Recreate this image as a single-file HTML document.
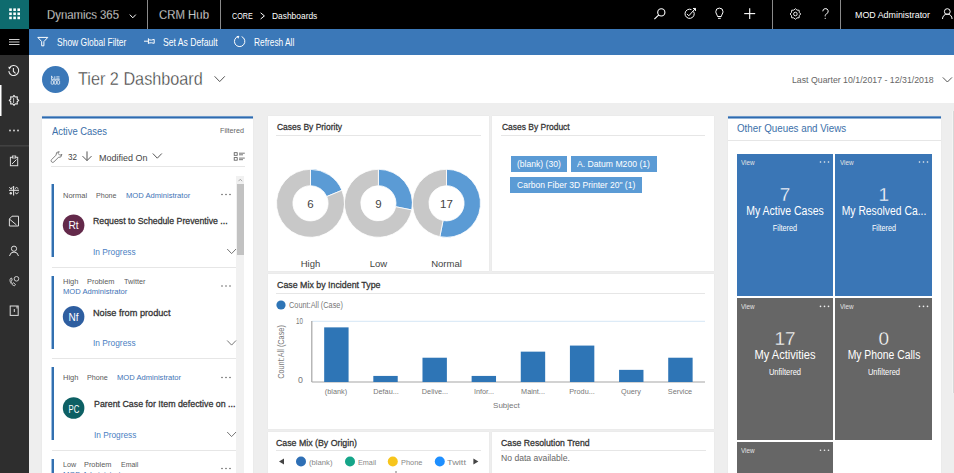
<!DOCTYPE html>
<html><head><meta charset="utf-8"><style>
html,body{margin:0;padding:0;}
body{width:954px;height:473px;overflow:hidden;position:relative;background:#eeeeee;font-family:"Liberation Sans",sans-serif;}
.t{position:absolute;white-space:nowrap;line-height:1;font-family:"Liberation Sans",sans-serif;}
.b{position:absolute;}
svg{position:absolute;overflow:visible;}

</style></head><body>
<div class="b" style="left:0px;top:0px;width:954px;height:29px;background:#000;"></div>
<div class="b" style="left:0px;top:0px;width:29px;height:29px;background:#0e6b6e;"></div>
<div class="b" style="left:147px;top:0px;width:1px;height:29px;background:#8a8a8a;"></div>
<div class="b" style="left:220px;top:0px;width:1px;height:29px;background:#8a8a8a;"></div>
<div class="b" style="left:772px;top:0px;width:1px;height:29px;background:#8a8a8a;"></div>
<div class="b" style="left:840px;top:0px;width:1px;height:29px;background:#8a8a8a;"></div>
<div class="b" style="left:0px;top:29px;width:29px;height:26px;background:#000;"></div>
<div class="b" style="left:0px;top:55px;width:29px;height:418px;background:#2e2e2e;"></div>
<div class="b" style="left:29px;top:29px;width:925px;height:26px;background:#3b78b8;"></div>
<div class="b" style="left:29px;top:55px;width:925px;height:48px;background:#ffffff;"></div>
<div class="b" style="left:42px;top:66px;width:27px;height:27px;background:#3b78b8;border-radius:50%"></div>
<div class="b" style="left:42px;top:116px;width:211px;height:357px;background:#fff;box-shadow:0 0 1px rgba(0,0,0,0.09);"></div>
<div class="b" style="left:42px;top:116px;width:211px;height:1px;background:#6d9acb;"></div>
<div class="b" style="left:42px;top:117px;width:211px;height:1px;background:#2f6aae;"></div>
<div class="b" style="left:42px;top:118px;width:211px;height:1px;background:#8fb2d8;"></div>
<div class="b" style="left:268px;top:116px;width:221px;height:155px;background:#fff;box-shadow:0 0 1px rgba(0,0,0,0.09);"></div>
<div class="b" style="left:492px;top:116px;width:222px;height:155px;background:#fff;box-shadow:0 0 1px rgba(0,0,0,0.09);"></div>
<div class="b" style="left:268px;top:274px;width:446px;height:154.5px;background:#fff;box-shadow:0 0 1px rgba(0,0,0,0.09);"></div>
<div class="b" style="left:268px;top:431.6px;width:221px;height:42px;background:#fff;box-shadow:0 0 1px rgba(0,0,0,0.09);"></div>
<div class="b" style="left:492px;top:431.6px;width:222px;height:42px;background:#fff;box-shadow:0 0 1px rgba(0,0,0,0.09);"></div>
<div class="b" style="left:728px;top:116px;width:213px;height:357px;background:#fff;box-shadow:0 0 1px rgba(0,0,0,0.09);"></div>
<div class="b" style="left:728px;top:116px;width:213px;height:1px;background:#6d9acb;"></div>
<div class="b" style="left:728px;top:117px;width:213px;height:1px;background:#2f6aae;"></div>
<div class="b" style="left:728px;top:118px;width:213px;height:1px;background:#8fb2d8;"></div>
<div class="b" style="left:953px;top:111px;width:1px;height:282px;background:#d8d8d8;"></div>
<div class="b" style="left:952px;top:111px;width:1px;height:282px;background:#f4f4f4;"></div>
<div class="b" style="left:276px;top:135px;width:205px;height:1px;background:#e6e6e6;"></div>
<div class="b" style="left:501px;top:135px;width:204px;height:1px;background:#e6e6e6;"></div>
<div class="b" style="left:276px;top:293px;width:429px;height:1px;background:#e6e6e6;"></div>
<div class="b" style="left:276px;top:450px;width:205px;height:1px;background:#e6e6e6;"></div>
<div class="b" style="left:501px;top:450px;width:205px;height:1px;background:#e6e6e6;"></div>
<div class="b" style="left:728px;top:140px;width:213px;height:1px;background:#e6e6e6;"></div>
<div class="b" style="left:51px;top:166px;width:194px;height:1px;background:#e6e6e6;"></div>
<div class="b" style="left:51px;top:184px;width:1px;height:73px;background:#9dbde0;"></div>
<div class="b" style="left:52px;top:184px;width:2px;height:73px;background:#3270b0;"></div>
<svg style="left:0;top:0" width="954" height="473"><circle cx="73.6" cy="225.2" r="10.8" fill="#63294a"/></svg>
<div class="b" style="left:52px;top:267px;width:184px;height:1px;background:#e6e6e6;"></div>
<div class="b" style="left:51px;top:276px;width:1px;height:73px;background:#9dbde0;"></div>
<div class="b" style="left:52px;top:276px;width:2px;height:73px;background:#3270b0;"></div>
<svg style="left:0;top:0" width="954" height="473"><circle cx="73.6" cy="316.7" r="10.8" fill="#2e5ea0"/></svg>
<div class="b" style="left:52px;top:358px;width:184px;height:1px;background:#e6e6e6;"></div>
<div class="b" style="left:51px;top:367px;width:1px;height:73px;background:#9dbde0;"></div>
<div class="b" style="left:52px;top:367px;width:2px;height:73px;background:#3270b0;"></div>
<svg style="left:0;top:0" width="954" height="473"><circle cx="73.6" cy="408" r="10.8" fill="#0d6064"/></svg>
<div class="b" style="left:52px;top:450px;width:184px;height:1px;background:#e6e6e6;"></div>
<div class="b" style="left:51px;top:459px;width:1px;height:14px;background:#9dbde0;"></div>
<div class="b" style="left:52px;top:459px;width:2px;height:14px;background:#3270b0;"></div>
<svg style="left:0;top:0" width="954" height="473"><circle cx="73.6" cy="0" r="10.8" fill="#000"/></svg>
<div class="b" style="left:236px;top:176px;width:8px;height:297px;background:#f1f1f1;"></div>
<div class="b" style="left:237px;top:184px;width:7px;height:71px;background:#c2c2c2;"></div>
<svg style="left:0;top:0" width="954" height="473" viewBox="0 0 954 473">
<path d="M310.50,169.30 A34,34 0 0 1 341.91,190.29 L326.76,196.56 A17.6,17.6 0 0 0 310.50,185.70 Z" fill="#5b9bd5" stroke="#fff" stroke-width="0.8"/>
<path d="M341.91,190.29 A34,34 0 1 1 310.50,169.30 L310.50,185.70 A17.6,17.6 0 1 0 326.76,196.56 Z" fill="#c8c8c8" stroke="#fff" stroke-width="0.8"/>
<path d="M378.40,169.30 A34,34 0 0 1 411.75,209.93 L395.66,206.73 A17.6,17.6 0 0 0 378.40,185.70 Z" fill="#5b9bd5" stroke="#fff" stroke-width="0.8"/>
<path d="M411.75,209.93 A34,34 0 1 1 378.40,169.30 L378.40,185.70 A17.6,17.6 0 1 0 395.66,206.73 Z" fill="#c8c8c8" stroke="#fff" stroke-width="0.8"/>
<path d="M446.50,169.30 A34,34 0 1 1 439.87,236.65 L443.07,220.56 A17.6,17.6 0 1 0 446.50,185.70 Z" fill="#5b9bd5" stroke="#fff" stroke-width="0.8"/>
<path d="M439.87,236.65 A34,34 0 0 1 446.50,169.30 L446.50,185.70 A17.6,17.6 0 0 0 443.07,220.56 Z" fill="#c8c8c8" stroke="#fff" stroke-width="0.8"/>
<line x1="311.8" y1="321.3" x2="705" y2="321.3" stroke="#d5e6f5" stroke-width="1"/>
<line x1="311.8" y1="321" x2="311.8" y2="382" stroke="#a6a6a6" stroke-width="1.2"/>
<line x1="311.8" y1="382" x2="705" y2="382" stroke="#a6a6a6" stroke-width="1.2"/>
<rect x="324.18" y="327.37" width="24.4" height="54.63" fill="#2e75b6"/>
<rect x="373.32" y="375.93" width="24.4" height="6.07" fill="#2e75b6"/>
<rect x="422.48" y="357.72" width="24.4" height="24.28" fill="#2e75b6"/>
<rect x="471.63" y="375.93" width="24.4" height="6.07" fill="#2e75b6"/>
<rect x="520.77" y="351.65" width="24.4" height="30.35" fill="#2e75b6"/>
<rect x="569.92" y="345.58" width="24.4" height="36.42" fill="#2e75b6"/>
<rect x="619.07" y="369.86" width="24.4" height="12.14" fill="#2e75b6"/>
<rect x="668.22" y="357.72" width="24.4" height="24.28" fill="#2e75b6"/>
<circle cx="281" cy="305" r="4.6" fill="#2e75b6"/>
<circle cx="301" cy="461.5" r="5" fill="#2e6fb5"/>
<circle cx="350" cy="461.5" r="5" fill="#15a589"/>
<circle cx="392.8" cy="461.5" r="5" fill="#f7c51c"/>
<circle cx="439.8" cy="461.5" r="5" fill="#1e8fff"/>
<path d="M279,461.5 L284,458.5 L284,464.5 Z" fill="#444"/>
<path d="M478.4,461.5 L473.4,458.5 L473.4,464.5 Z" fill="#444"/>
</svg>
<div class="b" style="left:511px;top:156px;width:56px;height:16.4px;background:#5b9bd5;"></div>
<div class="b" style="left:570.5px;top:156px;width:86px;height:16px;background:#5b9bd5;"></div>
<div class="b" style="left:510px;top:177px;width:132px;height:15.5px;background:#5b9bd5;"></div>
<div class="b" style="left:737px;top:154px;width:96px;height:142px;background:#3a76b6;"></div>
<div class="b" style="left:835px;top:154px;width:97px;height:142px;background:#3a76b6;"></div>
<div class="b" style="left:737px;top:298px;width:96px;height:142px;background:#666666;"></div>
<div class="b" style="left:835px;top:298px;width:97px;height:142px;background:#666666;"></div>
<div class="b" style="left:737px;top:442px;width:96px;height:31px;background:#666666;"></div>
<svg style="left:0;top:0" width="954" height="473" viewBox="0 0 954 473">
<rect x="9.2" y="8.4" width="2.6" height="2.6" fill="#fff"/>
<rect x="9.2" y="12.5" width="2.6" height="2.6" fill="#fff"/>
<rect x="9.2" y="16.6" width="2.6" height="2.6" fill="#fff"/>
<rect x="13.3" y="8.4" width="2.6" height="2.6" fill="#fff"/>
<rect x="13.3" y="12.5" width="2.6" height="2.6" fill="#fff"/>
<rect x="13.3" y="16.6" width="2.6" height="2.6" fill="#fff"/>
<rect x="17.4" y="8.4" width="2.6" height="2.6" fill="#fff"/>
<rect x="17.4" y="12.5" width="2.6" height="2.6" fill="#fff"/>
<rect x="17.4" y="16.6" width="2.6" height="2.6" fill="#fff"/>
<rect x="9" y="39.0" width="10.5" height="1" fill="#d0d0d0"/>
<rect x="9" y="41.5" width="10.5" height="1" fill="#d0d0d0"/>
<rect x="9" y="44.0" width="10.5" height="1" fill="#d0d0d0"/>
<polyline points="129.8,14.6 132.8,17.8 135.8,14.6" fill="none" stroke="#ffffff" stroke-width="1" />
<polyline points="260.6,12.8 264.4,15.9 260.6,19" fill="none" stroke="#ffffff" stroke-width="1" />
<circle cx="661.3" cy="12.4" r="3.6" fill="none" stroke="#fff" stroke-width="1.1"/>
<polyline points="658.8,14.9 654.4,19.1" fill="none" stroke="#ffffff" stroke-width="1.2" />
<path d="M693.6,11.5 A4.6,4.6 0 1 1 691.5,9.6" fill="none" stroke="#fff" stroke-width="1"/>
<polyline points="687,13.9 688.8,15.8 695.3,8.6" fill="none" stroke="#ffffff" stroke-width="1" />
<polyline points="693,8.5 695.5,8.4 695.4,11" fill="none" stroke="#ffffff" stroke-width="1" />
<path d="M717.5,16.5 C717.2,14.5 715.8,13.5 715.8,11.7 A3.6,3.6 0 0 1 723,11.7 C723,13.5 721.6,14.5 721.3,16.5 Z" fill="none" stroke="#fff" stroke-width="1"/>
<polyline points="718,18.3 720.8,18.3" fill="none" stroke="#ffffff" stroke-width="1" />
<polyline points="744.2,13.6 755.2,13.6" fill="none" stroke="#ffffff" stroke-width="1.1" />
<polyline points="749.7,8.2 749.7,19" fill="none" stroke="#ffffff" stroke-width="1.1" />
<polygon points="795.40,8.70 797.01,10.12 799.15,10.25 799.28,12.39 800.70,14.00 799.28,15.61 799.15,17.75 797.01,17.88 795.40,19.30 793.79,17.88 791.65,17.75 791.52,15.61 790.10,14.00 791.52,12.39 791.65,10.25 793.79,10.12" fill="none" stroke="#fff" stroke-width="0.9" stroke-linejoin="round"/>
<circle cx="795.4" cy="14" r="1.8" fill="none" stroke="#fff" stroke-width="0.9"/>
<path d="M822.8,11.3 A2.7,2.7 0 1 1 826.5,13.8 C825.4,14.5 825.2,15 825.2,16.4" fill="none" stroke="#fff" stroke-width="1"/>
<circle cx="825.2" cy="18.3" r="0.6" fill="#fff"/>
<circle cx="947.3" cy="11.6" r="2.9" fill="none" stroke="#fff" stroke-width="1"/>
<path d="M942.5,19 A4.8,5 0 0 1 952.1,19" fill="none" stroke="#fff" stroke-width="1"/>
<path d="M37.8,37.4 L47.8,37.4 L43.9,41.6 L43.9,45.8 L41.7,45.8 L41.7,41.6 Z" fill="none" stroke="#fff" stroke-width="1" stroke-linejoin="round"/>
<polyline points="144,41.2 148.3,41.2" fill="none" stroke="#ffffff" stroke-width="1" />
<path d="M148.4,38.3 L148.4,43.8 M148.4,39.8 Q151.4,40.6 154.2,39.4 L154.2,43.3 Q151.4,42.4 148.4,43" fill="none" stroke="#fff" stroke-width="1"/>
<path d="M238.6,36.3 A5.2,5.2 0 1 0 241.65,36.6" fill="none" stroke="#fff" stroke-width="1"/>
<path d="M236.6,36 L239.4,36.2 L238.2,38.8 Z" fill="#fff"/>
<rect x="51.2" y="80.6" width="2.4" height="3.6" rx="0.6" fill="none" stroke="#fff" stroke-width="0.7"/>
<rect x="54.2" y="80.6" width="2.4" height="3.6" rx="0.6" fill="none" stroke="#fff" stroke-width="0.7"/>
<rect x="57.2" y="80.6" width="2.4" height="3.6" rx="0.6" fill="none" stroke="#fff" stroke-width="0.7"/>
<polyline points="51,79.4 59.8,79.4" fill="none" stroke="#ffffff" stroke-width="0.7" />
<polyline points="51.5,75.8 51.5,79 M52.8,76.3 L52.8,79" fill="none" stroke="#ffffff" stroke-width="0.7" />
<path d="M51.5,76 L53.5,78.5 M54.8,76.2 L54.8,79 M56.3,76.8 L59.5,76.8 M56.3,78.2 L59.5,78.2" stroke="#fff" stroke-width="0.7" fill="none"/>
<polyline points="214.6,76.3 219.7,81.6 224.8,76.3" fill="none" stroke="#555" stroke-width="1" />
<polyline points="942.8,77.4 947.4,82 952,77.4" fill="none" stroke="#555" stroke-width="1" />
<path d="M9.37,68.00 A5,5 0 1 1 8.75,71.20" fill="none" stroke="#e8e8e8" stroke-width="1.1"/>
<path d="M8.3,66.8 L11.2,67.2 L9.2,69.6 Z" fill="#f0f0f0"/>
<polyline points="13.4,68 13.4,71.4 15.6,73.4" fill="none" stroke="#e8e8e8" stroke-width="1.1" />
<rect x="0" y="85" width="1.5" height="31" fill="#fff"/>
<polygon points="18.75,100.40 17.16,101.78 17.36,103.94 15.31,103.73 14.00,105.40 12.69,103.73 10.64,103.94 10.84,101.78 9.25,100.40 10.84,99.02 10.64,96.86 12.69,97.07 14.00,95.40 15.31,97.07 17.36,96.86 17.16,99.02" fill="none" stroke="#e8e8e8" stroke-width="1.1" stroke-linejoin="round"/>
<polyline points="13.6,97.8 13.6,103" fill="none" stroke="#e8e8e8" stroke-width="0.8" />
<circle cx="10" cy="130.5" r="0.9" fill="#ddd"/>
<circle cx="14" cy="130.5" r="0.9" fill="#ddd"/>
<circle cx="18" cy="130.5" r="0.9" fill="#ddd"/>
<rect x="0" y="145.5" width="29" height="0.8" fill="#555"/>
<rect x="10.4" y="157.3" width="7.3" height="8.4" fill="none" stroke="#ddd" stroke-width="1"/>
<rect x="12.4" y="156" width="3.3" height="2" fill="#2e2e2e" stroke="#ddd" stroke-width="0.9"/>
<polyline points="12,164 16.5,159.5" fill="none" stroke="#ddd" stroke-width="1" />
<polyline points="13.6,185.9 13.6,195.4" fill="none" stroke="#e0e0e0" stroke-width="1.1" />
<polyline points="9,190.3 19,190.3" fill="none" stroke="#e0e0e0" stroke-width="1.1" />
<polyline points="9.3,187.2 11.3,189.2 12.3,186.8" fill="none" stroke="#e0e0e0" stroke-width="1" />
<path d="M15,188.6 Q16.5,186.3 18.3,188.6" fill="none" stroke="#e0e0e0" stroke-width="1"/>
<circle cx="10.8" cy="193.3" r="1.2" fill="#e0e0e0"/>
<polyline points="15,192.6 16.8,193.8 18.6,192.2" fill="none" stroke="#e0e0e0" stroke-width="1" />
<path d="M9.4,219 L12,216.2 L18.5,216.2 L18.5,226 L9.4,226 Z M9.4,219 L16.5,225" fill="none" stroke="#ddd" stroke-width="1"/>
<circle cx="14" cy="248.7" r="2.6" fill="none" stroke="#ddd" stroke-width="1"/>
<path d="M9.5,256 A4.6,5 0 0 1 18.5,256" fill="none" stroke="#ddd" stroke-width="1"/>
<path d="M10.5,278.5 C9,280.5 11,285 14.5,285.8 L15.5,284.5 L13.5,282.8 L12.5,283.5 C11.5,282.8 11,281.8 11.2,280.8 L12.2,280.2 L11.6,278 Z" fill="none" stroke="#ddd" stroke-width="0.9"/>
<circle cx="16.5" cy="278.8" r="2.3" fill="none" stroke="#ddd" stroke-width="0.9"/>
<rect x="10.2" y="306" width="8" height="9.4" fill="none" stroke="#ddd" stroke-width="1"/>
<polyline points="14.3,309 14.3,312" fill="none" stroke="#ddd" stroke-width="1" />
<polyline points="17,306 17,308.5" fill="none" stroke="#ddd" stroke-width="1" />
<path d="M51.6,159.6 L56,155.2 A3.3,3.3 0 0 1 59.2,151.6 L58.2,153.6 L59.9,155.3 L61.9,154.3 A3.3,3.3 0 0 1 58.3,157.5 L53.9,161.9 A1.1,1.1 0 0 1 51.6,159.6 Z" fill="none" stroke="#6a6a6a" stroke-width="0.85" stroke-linejoin="round"/>
<polyline points="87,151.4 87,160.6" fill="none" stroke="#555" stroke-width="1" />
<polyline points="82.5,156.1 87,160.6 91.5,156.1" fill="none" stroke="#555" stroke-width="1" />
<polyline points="152.8,153.5 157.3,158.2 161.8,153.5" fill="none" stroke="#555" stroke-width="1" />
<rect x="234.2" y="152.7" width="3" height="2.6" fill="none" stroke="#555" stroke-width="0.8"/>
<polyline points="239,153.2 244.8,153.2" fill="none" stroke="#555" stroke-width="0.8" />
<polyline points="239,154.79999999999998 243,154.79999999999998" fill="none" stroke="#555" stroke-width="0.8" />
<rect x="234.2" y="157.6" width="3" height="2.6" fill="none" stroke="#555" stroke-width="0.8"/>
<polyline points="239,158.1 244.8,158.1" fill="none" stroke="#555" stroke-width="0.8" />
<polyline points="239,159.7 243,159.7" fill="none" stroke="#555" stroke-width="0.8" />
<circle cx="222" cy="194.4" r="0.75" fill="#555"/>
<circle cx="226" cy="194.4" r="0.75" fill="#555"/>
<circle cx="230" cy="194.4" r="0.75" fill="#555"/>
<polyline points="227.2,249 231.6,253.6 236,249" fill="none" stroke="#666" stroke-width="0.9" />
<circle cx="222" cy="285.9" r="0.75" fill="#555"/>
<circle cx="226" cy="285.9" r="0.75" fill="#555"/>
<circle cx="230" cy="285.9" r="0.75" fill="#555"/>
<polyline points="227.2,340.5 231.6,345.1 236,340.5" fill="none" stroke="#666" stroke-width="0.9" />
<circle cx="222" cy="377.6" r="0.75" fill="#555"/>
<circle cx="226" cy="377.6" r="0.75" fill="#555"/>
<circle cx="230" cy="377.6" r="0.75" fill="#555"/>
<polyline points="227.2,432 231.6,436.6 236,432" fill="none" stroke="#666" stroke-width="0.9" />
<circle cx="222" cy="468.5" r="0.75" fill="#555"/>
<circle cx="226" cy="468.5" r="0.75" fill="#555"/>
<circle cx="230" cy="468.5" r="0.75" fill="#555"/>
<path d="M238.5,181.2 L240.3,179.2 L242.1,181.2" fill="none" stroke="#999" stroke-width="0.8"/>
<circle cx="820.5" cy="162" r="0.8" fill="#f0f0f0"/>
<circle cx="824.5" cy="162" r="0.8" fill="#f0f0f0"/>
<circle cx="828.5" cy="162" r="0.8" fill="#f0f0f0"/>
<circle cx="919.5" cy="162" r="0.8" fill="#f0f0f0"/>
<circle cx="923.5" cy="162" r="0.8" fill="#f0f0f0"/>
<circle cx="927.5" cy="162" r="0.8" fill="#f0f0f0"/>
<circle cx="820.5" cy="306.4" r="0.8" fill="#f0f0f0"/>
<circle cx="824.5" cy="306.4" r="0.8" fill="#f0f0f0"/>
<circle cx="828.5" cy="306.4" r="0.8" fill="#f0f0f0"/>
<circle cx="919.5" cy="306.4" r="0.8" fill="#f0f0f0"/>
<circle cx="923.5" cy="306.4" r="0.8" fill="#f0f0f0"/>
<circle cx="927.5" cy="306.4" r="0.8" fill="#f0f0f0"/>
<circle cx="820.5" cy="450.3" r="0.8" fill="#f0f0f0"/>
<circle cx="824.5" cy="450.3" r="0.8" fill="#f0f0f0"/>
<circle cx="828.5" cy="450.3" r="0.8" fill="#f0f0f0"/>
<rect x="395.5" y="471" width="1" height="2" fill="#777"/>
</svg>
<div class="t" id="t0" style="top:7.90px;font-size:13px;color:#ffffff;font-weight:400;left:47.20px;transform-origin:0 0;transform:scaleX(0.8741);-webkit-text-stroke:0.3px #000;">Dynamics 365</div>
<div class="t" id="t1" style="top:7.90px;font-size:13px;color:#ffffff;font-weight:400;left:158.50px;transform-origin:0 0;transform:scaleX(0.8760);-webkit-text-stroke:0.3px #000;">CRM Hub</div>
<div class="t" id="t2" style="top:12.18px;font-size:9px;color:#ffffff;font-weight:400;left:232.00px;transform-origin:0 0;transform:scaleX(0.7995);">CORE</div>
<div class="t" id="t3" style="top:12.18px;font-size:9px;color:#ffffff;font-weight:400;left:271.60px;transform-origin:0 0;transform:scaleX(0.9334);">Dashboards</div>
<div class="t" id="t4" style="top:11.23px;font-size:9.3px;color:#ffffff;font-weight:400;left:855.40px;transform-origin:0 0;transform:scaleX(0.9550);">MOD Administrator</div>
<div class="t" id="t5" style="top:37.97px;font-size:10.2px;color:#ffffff;font-weight:400;left:56.70px;transform-origin:0 0;transform:scaleX(0.8338);">Show Global Filter</div>
<div class="t" id="t6" style="top:37.97px;font-size:10.2px;color:#ffffff;font-weight:400;left:162.60px;transform-origin:0 0;transform:scaleX(0.8457);">Set As Default</div>
<div class="t" id="t7" style="top:37.97px;font-size:10.2px;color:#ffffff;font-weight:400;left:253.70px;transform-origin:0 0;transform:scaleX(0.8180);">Refresh All</div>
<div class="t" id="t8" style="top:69.12px;font-size:19px;color:#3c3c3c;font-weight:400;left:78.00px;transform-origin:0 0;transform:scaleX(0.8542);-webkit-text-stroke:0.35px #fff;">Tier 2 Dashboard</div>
<div class="t" id="t9" style="top:76.01px;font-size:9.2px;color:#666666;font-weight:400;left:791.50px;transform-origin:0 0;transform:scaleX(0.9533);">Last Quarter 10/1/2017 - 12/31/2018</div>
<div class="t" id="t10" style="top:125.81px;font-size:10.5px;color:#3b6fa9;font-weight:400;left:51.50px;transform-origin:0 0;transform:scaleX(0.8975);">Active Cases</div>
<div class="t" id="t11" style="top:127.43px;font-size:8px;color:#666666;font-weight:400;left:220.00px;transform-origin:0 0;transform:scaleX(0.8993);">Filtered</div>
<div class="t" id="t12" style="top:152.39px;font-size:9.7px;color:#444444;font-weight:400;left:68.40px;transform-origin:0 0;transform:scaleX(0.8348);">32</div>
<div class="t" id="t13" style="top:152.74px;font-size:9.4px;color:#444444;font-weight:400;left:98.80px;transform-origin:0 0;transform:scaleX(0.9575);">Modified On</div>
<div class="t" id="t14" style="top:191.53px;font-size:8px;color:#5a5a5a;font-weight:400;left:62.60px;transform-origin:0 0;transform:scaleX(0.9387);">Normal</div>
<div class="t" id="t15" style="top:191.53px;font-size:8px;color:#5a5a5a;font-weight:400;left:96.00px;transform-origin:0 0;transform:scaleX(0.8859);">Phone</div>
<div class="t" id="t16" style="top:191.53px;font-size:8px;color:#3f74b6;font-weight:400;left:125.60px;transform-origin:0 0;transform:scaleX(0.9500);">MOD Administrator</div>
<div class="t" id="t17" style="top:217.03px;font-size:9.3px;color:#333333;font-weight:400;-webkit-text-stroke:0.28px #333333;left:93.40px;transform-origin:0 0;transform:scaleX(0.9402);">Request to Schedule Preventive ...</div>
<div class="t" id="t18" style="top:246.96px;font-size:9.5px;color:#4a80c2;font-weight:400;left:93.40px;transform-origin:0 0;transform:scaleX(0.8769);">In Progress</div>
<div class="t" id="t19" style="top:278.23px;font-size:8px;color:#5a5a5a;font-weight:400;left:62.60px;transform-origin:0 0;transform:scaleX(0.9360);">High</div>
<div class="t" id="t20" style="top:278.23px;font-size:8px;color:#5a5a5a;font-weight:400;left:86.80px;transform-origin:0 0;transform:scaleX(0.9229);">Problem</div>
<div class="t" id="t21" style="top:278.23px;font-size:8px;color:#5a5a5a;font-weight:400;left:123.80px;transform-origin:0 0;transform:scaleX(0.9082);">Twitter</div>
<div class="t" id="t22" style="top:288.23px;font-size:8px;color:#3f74b6;font-weight:400;left:62.60px;transform-origin:0 0;transform:scaleX(0.9515);">MOD Administrator</div>
<div class="t" id="t23" style="top:308.53px;font-size:9.3px;color:#333333;font-weight:400;-webkit-text-stroke:0.28px #333333;left:93.40px;transform-origin:0 0;transform:scaleX(0.9867);">Noise from product</div>
<div class="t" id="t24" style="top:338.46px;font-size:9.5px;color:#4a80c2;font-weight:400;left:93.40px;transform-origin:0 0;transform:scaleX(0.8769);">In Progress</div>
<div class="t" id="t25" style="top:374.43px;font-size:8px;color:#5a5a5a;font-weight:400;left:62.50px;transform-origin:0 0;transform:scaleX(0.9360);">High</div>
<div class="t" id="t26" style="top:374.43px;font-size:8px;color:#5a5a5a;font-weight:400;left:86.60px;transform-origin:0 0;transform:scaleX(0.8945);">Phone</div>
<div class="t" id="t27" style="top:374.43px;font-size:8px;color:#3f74b6;font-weight:400;left:116.80px;transform-origin:0 0;transform:scaleX(0.9485);">MOD Administrator</div>
<div class="t" id="t28" style="top:399.93px;font-size:9.3px;color:#333333;font-weight:400;-webkit-text-stroke:0.28px #333333;left:93.60px;transform-origin:0 0;transform:scaleX(0.9501);">Parent Case for Item defective on ...</div>
<div class="t" id="t29" style="top:430.16px;font-size:9.5px;color:#4a80c2;font-weight:400;left:93.60px;transform-origin:0 0;transform:scaleX(0.8728);">In Progress</div>
<div class="t" id="t30" style="top:460.93px;font-size:8px;color:#5a5a5a;font-weight:400;left:62.50px;transform-origin:0 0;transform:scaleX(0.8987);">Low</div>
<div class="t" id="t31" style="top:460.93px;font-size:8px;color:#5a5a5a;font-weight:400;left:84.40px;transform-origin:0 0;transform:scaleX(0.9196);">Problem</div>
<div class="t" id="t32" style="top:460.93px;font-size:8px;color:#5a5a5a;font-weight:400;left:120.60px;transform-origin:0 0;transform:scaleX(0.8693);">Email</div>
<div class="t" id="t33" style="top:470.83px;font-size:8px;color:#3f74b6;font-weight:400;left:62.50px;transform-origin:0 0;transform:scaleX(0.9515);">MOD Administrator</div>
<div class="t" id="t34" style="top:123.23px;font-size:9.3px;color:#333333;font-weight:400;-webkit-text-stroke:0.28px #333333;left:277.00px;transform-origin:0 0;transform:scaleX(0.9117);">Cases By Priority</div>
<div class="t" id="t35" style="top:123.23px;font-size:9.3px;color:#333333;font-weight:400;-webkit-text-stroke:0.28px #333333;left:501.70px;transform-origin:0 0;transform:scaleX(0.9097);">Cases By Product</div>
<div class="t" id="t36" style="top:281.13px;font-size:9.3px;color:#333333;font-weight:400;-webkit-text-stroke:0.28px #333333;left:276.90px;transform-origin:0 0;transform:scaleX(0.9506);">Case Mix by Incident Type</div>
<div class="t" id="t37" style="top:438.73px;font-size:9.3px;color:#333333;font-weight:400;-webkit-text-stroke:0.28px #333333;left:276.40px;transform-origin:0 0;transform:scaleX(0.9444);">Case Mix (By Origin)</div>
<div class="t" id="t38" style="top:438.73px;font-size:9.3px;color:#333333;font-weight:400;-webkit-text-stroke:0.28px #333333;left:501.40px;transform-origin:0 0;transform:scaleX(0.9368);">Case Resolution Trend</div>
<div class="t" id="t39" style="top:453.68px;font-size:9px;color:#666666;font-weight:400;left:501.40px;transform-origin:0 0;transform:scaleX(0.9561);">No data available.</div>
<div class="t" id="t40" style="top:258.96px;font-size:9.5px;color:#444444;font-weight:400;left:310.50px;transform:translateX(-50%);">High</div>
<div class="t" id="t41" style="top:198.57px;font-size:11.5px;color:#444444;font-weight:400;left:310.50px;transform:translateX(-50%);">6</div>
<div class="t" id="t42" style="top:258.96px;font-size:9.5px;color:#444444;font-weight:400;left:378.50px;transform:translateX(-50%);">Low</div>
<div class="t" id="t43" style="top:198.57px;font-size:11.5px;color:#444444;font-weight:400;left:378.50px;transform:translateX(-50%);">9</div>
<div class="t" id="t44" style="top:258.96px;font-size:9.5px;color:#444444;font-weight:400;left:446.50px;transform:translateX(-50%);">Normal</div>
<div class="t" id="t45" style="top:198.57px;font-size:11.5px;color:#444444;font-weight:400;left:446.50px;transform:translateX(-50%);">17</div>
<div class="t" id="t46" style="top:159.98px;font-size:9px;color:#ffffff;font-weight:400;left:516.90px;transform-origin:0 0;transform:scaleX(0.9519);">(blank) (30)</div>
<div class="t" id="t47" style="top:159.98px;font-size:9px;color:#ffffff;font-weight:400;left:577.00px;transform-origin:0 0;transform:scaleX(0.9601);">A. Datum M200 (1)</div>
<div class="t" id="t48" style="top:180.68px;font-size:9px;color:#ffffff;font-weight:400;left:516.90px;transform-origin:0 0;transform:scaleX(0.9483);">Carbon Fiber 3D Printer 20" (1)</div>
<div class="t" id="t49" style="top:300.80px;font-size:8.5px;color:#777777;font-weight:400;left:288.70px;transform-origin:0 0;transform:scaleX(0.8643);">Count:All (Case)</div>
<div class="t" id="t50" style="top:317.05px;font-size:8.8px;color:#777777;font-weight:400;left:296.00px;transform-origin:0 0;transform:scaleX(0.7043);">10</div>
<div class="t" id="t51" style="top:376.25px;font-size:8.8px;color:#777777;font-weight:400;left:303.00px;transform:translateX(-100%);">0</div>
<div class="t" id="t52" style="top:387.73px;font-size:8px;color:#777777;font-weight:400;left:336.38px;transform:translateX(-50%);transform:translateX(-50%) scaleX(0.9100);">(blank)</div>
<div class="t" id="t53" style="top:387.73px;font-size:8px;color:#777777;font-weight:400;left:385.52px;transform:translateX(-50%);transform:translateX(-50%) scaleX(0.9100);">Defau...</div>
<div class="t" id="t54" style="top:387.73px;font-size:8px;color:#777777;font-weight:400;left:434.68px;transform:translateX(-50%);transform:translateX(-50%) scaleX(0.9100);">Delive...</div>
<div class="t" id="t55" style="top:387.73px;font-size:8px;color:#777777;font-weight:400;left:483.83px;transform:translateX(-50%);transform:translateX(-50%) scaleX(0.9100);">Infor...</div>
<div class="t" id="t56" style="top:387.73px;font-size:8px;color:#777777;font-weight:400;left:532.98px;transform:translateX(-50%);transform:translateX(-50%) scaleX(0.9100);">Maint...</div>
<div class="t" id="t57" style="top:387.73px;font-size:8px;color:#777777;font-weight:400;left:582.12px;transform:translateX(-50%);transform:translateX(-50%) scaleX(0.9100);">Produ...</div>
<div class="t" id="t58" style="top:387.73px;font-size:8px;color:#777777;font-weight:400;left:631.27px;transform:translateX(-50%);transform:translateX(-50%) scaleX(0.9100);">Query</div>
<div class="t" id="t59" style="top:387.73px;font-size:8px;color:#777777;font-weight:400;left:680.42px;transform:translateX(-50%);transform:translateX(-50%) scaleX(0.9100);">Service</div>
<div class="t" id="t60" style="top:402.23px;font-size:8px;color:#777777;font-weight:400;left:506.40px;transform:translateX(-50%);">Subject</div>
<div class="t" id="t61" style="top:344.80px;font-size:8.5px;color:#777777;font-weight:400;left:281.30px;transform:translate(-50%,-50%) rotate(-90deg) scaleX(0.86);top:352px;">Count:All (Case)</div>
<div class="t" id="t62" style="top:458.53px;font-size:8px;color:#888888;font-weight:400;left:309.00px;transform-origin:0 0;transform:scaleX(0.9610);">(blank)</div>
<div class="t" id="t63" style="top:458.53px;font-size:8px;color:#888888;font-weight:400;left:357.60px;transform-origin:0 0;transform:scaleX(0.9043);">Email</div>
<div class="t" id="t64" style="top:458.53px;font-size:8px;color:#888888;font-weight:400;left:400.90px;transform-origin:0 0;transform:scaleX(0.9248);">Phone</div>
<div class="t" id="t65" style="top:458.53px;font-size:8px;color:#888888;font-weight:400;left:447.40px;transform-origin:0 0;transform:scaleX(1.1548);">Twitt</div>
<div class="t" id="t66" style="top:122.71px;font-size:10.5px;color:#3b6fa9;font-weight:400;left:736.90px;transform-origin:0 0;transform:scaleX(0.9322);">Other Queues and Views</div>
<div class="t" id="t67" style="top:159.07px;font-size:7px;color:#e4e4e4;font-weight:400;left:741.30px;transform-origin:0 0;transform:scaleX(0.8972);">View</div>
<div class="t" id="t68" style="top:185.42px;font-size:19px;color:#ffffff;font-weight:400;left:785.00px;transform:translateX(-50%);-webkit-text-stroke:0.35px #3a76b6;">7</div>
<div class="t" id="t69" style="top:204.64px;font-size:12px;color:#ffffff;font-weight:400;left:785.00px;transform:translateX(-50%);transform:translateX(-50%) scaleX(0.8737);">My Active Cases</div>
<div class="t" id="t70" style="top:223.80px;font-size:8.5px;color:#ffffff;font-weight:400;left:785.00px;transform:translateX(-50%);transform:translateX(-50%) scaleX(0.8573);">Filtered</div>
<div class="t" id="t71" style="top:159.07px;font-size:7px;color:#e4e4e4;font-weight:400;left:840.10px;transform-origin:0 0;transform:scaleX(0.8972);">View</div>
<div class="t" id="t72" style="top:185.42px;font-size:19px;color:#ffffff;font-weight:400;left:883.80px;transform:translateX(-50%);-webkit-text-stroke:0.35px #3a76b6;">1</div>
<div class="t" id="t73" style="top:204.64px;font-size:12px;color:#ffffff;font-weight:400;left:883.80px;transform:translateX(-50%);transform:translateX(-50%) scaleX(0.8629);">My Resolved Ca...</div>
<div class="t" id="t74" style="top:223.80px;font-size:8.5px;color:#ffffff;font-weight:400;left:883.80px;transform:translateX(-50%);transform:translateX(-50%) scaleX(0.8503);">Filtered</div>
<div class="t" id="t75" style="top:303.07px;font-size:7px;color:#e4e4e4;font-weight:400;left:741.30px;transform-origin:0 0;transform:scaleX(0.8972);">View</div>
<div class="t" id="t76" style="top:329.42px;font-size:19px;color:#ffffff;font-weight:400;left:785.00px;transform:translateX(-50%);-webkit-text-stroke:0.35px #666666;">17</div>
<div class="t" id="t77" style="top:348.64px;font-size:12px;color:#ffffff;font-weight:400;left:785.00px;transform:translateX(-50%);transform:translateX(-50%) scaleX(0.9255);">My Activities</div>
<div class="t" id="t78" style="top:367.80px;font-size:8.5px;color:#ffffff;font-weight:400;left:785.00px;transform:translateX(-50%);transform:translateX(-50%) scaleX(0.8821);">Unfiltered</div>
<div class="t" id="t79" style="top:303.07px;font-size:7px;color:#e4e4e4;font-weight:400;left:840.10px;transform-origin:0 0;transform:scaleX(0.8972);">View</div>
<div class="t" id="t80" style="top:329.42px;font-size:19px;color:#ffffff;font-weight:400;left:883.80px;transform:translateX(-50%);-webkit-text-stroke:0.35px #666666;">0</div>
<div class="t" id="t81" style="top:348.64px;font-size:12px;color:#ffffff;font-weight:400;left:883.80px;transform:translateX(-50%);transform:translateX(-50%) scaleX(0.8650);">My Phone Calls</div>
<div class="t" id="t82" style="top:367.80px;font-size:8.5px;color:#ffffff;font-weight:400;left:883.80px;transform:translateX(-50%);transform:translateX(-50%) scaleX(0.8821);">Unfiltered</div>
<div class="t" id="t83" style="top:447.37px;font-size:7px;color:#e4e4e4;font-weight:400;left:741.30px;transform-origin:0 0;transform:scaleX(0.8972);">View</div>
<div class="t" id="t84" style="top:220.97px;font-size:10.2px;color:#ffffff;font-weight:400;left:73.60px;transform:translateX(-50%);">Rt</div>
<div class="t" id="t85" style="top:312.94px;font-size:10px;color:#ffffff;font-weight:400;left:73.60px;transform:translateX(-50%);">Nf</div>
<div class="t" id="t86" style="top:404.97px;font-size:10.2px;color:#ffffff;font-weight:400;left:73.50px;transform:translateX(-50%);transform:translateX(-50%) scaleX(0.7629);">PC</div>
</body></html>
